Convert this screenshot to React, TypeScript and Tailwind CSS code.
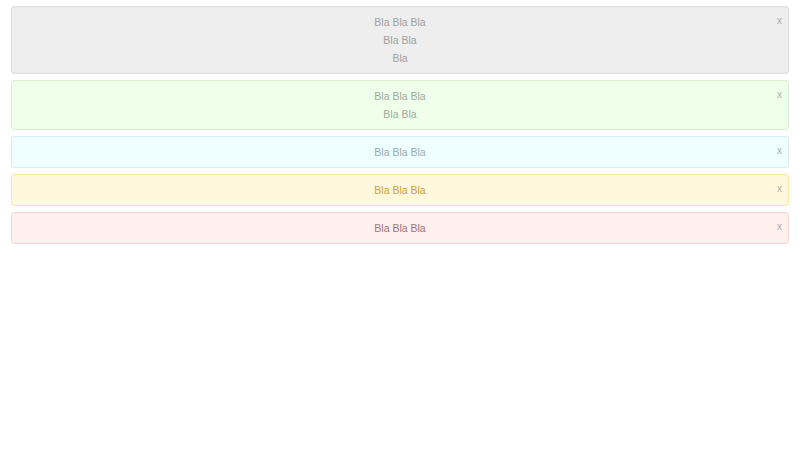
const alerts = [
  {
    lines: ["Bla Bla Bla", "Bla Bla", "Bla"],
    box: "bg-[#eeeeee] border-[#dddddd] text-[#a0a0a0]",
  },
  {
    lines: ["Bla Bla Bla", "Bla Bla"],
    box: "bg-[#efffea] border-[#d8efd0] text-[#a0aa9c]",
  },
  {
    lines: ["Bla Bla Bla"],
    box: "bg-[#efffff] border-[#d4ecf2] text-[#9aaab0]",
  },
  {
    lines: ["Bla Bla Bla"],
    box: "bg-[#fff8dc] border-[#f7e5a4] text-[#c9a33a]",
  },
  {
    lines: ["Bla Bla Bla"],
    box: "bg-[#ffefed] border-[#f5d9d6] text-[#a07575]",
  },
];

export default function App() {
  return (
    <div
      className="flex min-h-[450px] flex-col gap-[6px] bg-white px-[11px] pt-[6px]"
      style={{ fontFamily: '"Liberation Sans", Arial, sans-serif' }}
    >
      {alerts.map((a, i) => (
        <div
          key={i}
          className={`relative rounded-[3px] border px-8 py-[6px] text-center text-[10.5px] leading-[18px] ${a.box}`}
        >
          {a.lines.map((l, j) => (
            <div key={j}>{l}</div>
          ))}
          <span className="absolute right-[6px] top-[5px] text-[10px] leading-[18px] text-[#aaaaaa]">x</span>
        </div>
      ))}
    </div>
  );
}
